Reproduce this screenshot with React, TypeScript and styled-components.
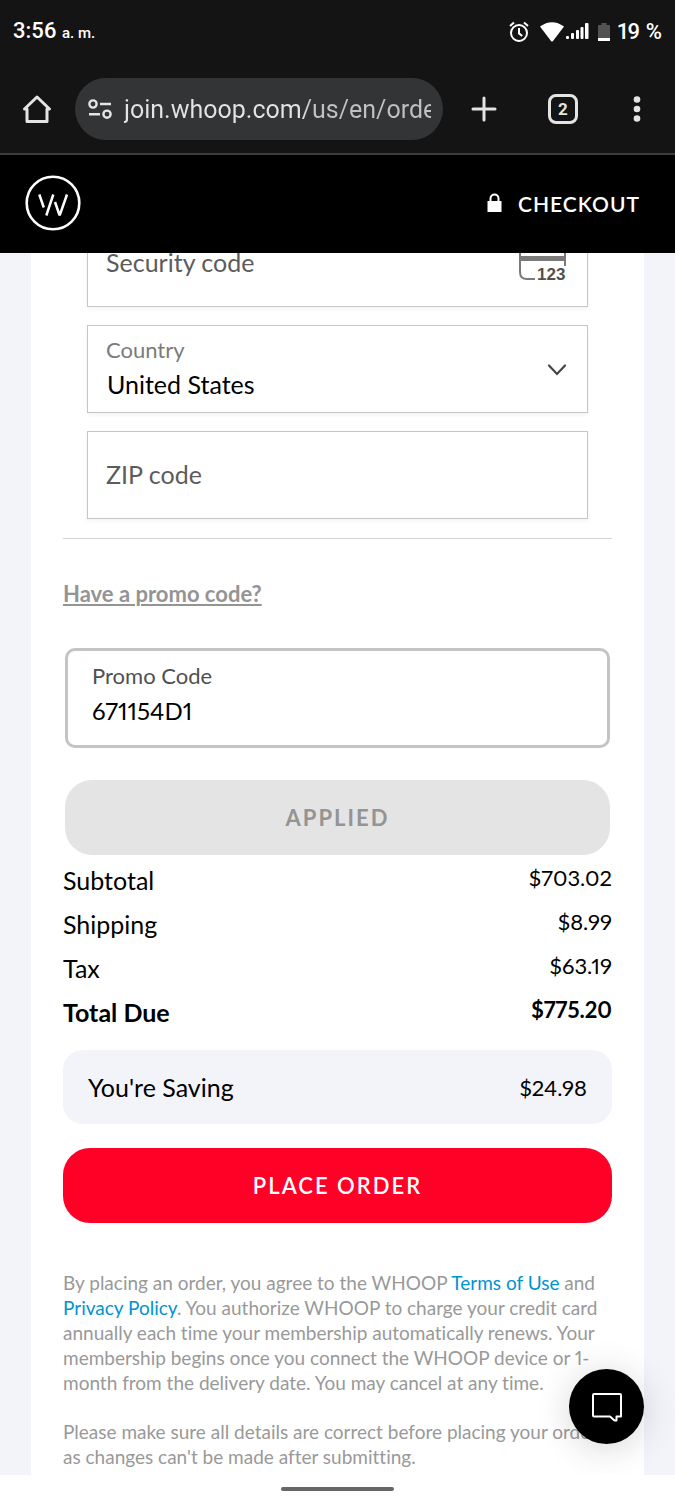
import React from 'react';
import styled, { createGlobalStyle } from 'styled-components';

const GlobalStyle = createGlobalStyle`
  * { box-sizing: border-box; }
  body {
    margin: 0;
    background: #ffffff;
    color: #000000;
    font-family: Lato, "Liberation Sans", sans-serif;
    font-variant-ligatures: none;
    font-variant-numeric: proportional-nums;
  }
  button, input, select { font: inherit; color: inherit; margin: 0; }
  button { border: 0; padding: 0; background: none; cursor: pointer; }
  svg { display: block; flex: none; }
`;

const Page = styled.div`
  display: flex;
  flex-direction: column;
  min-height: 100vh;
`;

const SystemChrome = styled.div`
  background: #141414;
  border-bottom: 2px solid #3e3e3e;
  color: #ffffff;
  font-family: Roboto, "Liberation Sans", sans-serif;
`;

const StatusBar = styled.div`
  display: flex;
  align-items: center;
  justify-content: space-between;
  height: 64px;
  padding: 0 13px;
  font-weight: 500;
`;

const Clock = styled.div`
  font-size: 22px;
  line-height: 28px;
`;

const Meridiem = styled.span`
  font-size: 15px;
`;

const StatusIcons = styled.div`
  display: flex;
  align-items: center;
  font-size: 22px;
  line-height: 28px;
`;

const Battery = styled.span`
  display: flex;
  align-items: center;
  gap: 8px;
  margin-left: 9px;
`;

const Signal = styled.span`
  display: flex;
  gap: 2px;
  margin-left: 11px;
`;

const Toolbar = styled.div`
  display: flex;
  align-items: center;
  height: 89px;
  padding: 0 30px 0 22px;
`;

const AddressBar = styled.div`
  display: flex;
  align-items: center;
  gap: 12px;
  flex: 1;
  min-width: 0;
  height: 62px;
  margin: 0 28px 0 23px;
  padding: 0 12px 0 13px;
  border-radius: 31px;
  background: #323436;
`;

const Address = styled.input`
  flex: 1;
  min-width: 0;
  height: 40px;
  padding: 2px 0 0;
  border: 0;
  outline: 0;
  font-size: 25px;
  color: transparent;
  background: linear-gradient(90deg, #e4e4e4 178px, #c0c1c2 186px);
  background-clip: text;
  -webkit-background-clip: text;
`;

const ToolButtons = styled.div`
  display: flex;
  align-items: center;
  gap: 51px;
`;

const TabCount = styled.button`
  width: 30px;
  height: 30px;
  border: 3px solid #e4e4e4;
  border-radius: 8px;
  color: #e4e4e4;
  font-size: 17px;
  font-weight: 700;
  line-height: 24px;
`;

const SiteHeader = styled.header`
  display: flex;
  align-items: center;
  justify-content: space-between;
  height: 98px;
  padding: 0 35px 2px 25px;
  background: #000000;
  color: #ffffff;
`;

const CheckoutTitle = styled.h1`
  display: flex;
  align-items: center;
  gap: 16px;
  margin: 0;
  font-size: 21px;
  font-weight: 600;
  letter-spacing: 1px;
`;

const Viewport = styled.main`
  flex: 1;
  overflow: hidden;
  padding: 0 31px;
  background: #f2f4f9;
`;

const Card = styled.form`
  margin-top: -34px;
  padding: 0 32px 6px;
  background: #ffffff;
`;

const CardFields = styled.div`
  display: flex;
  flex-direction: column;
  gap: 18px;
  padding: 0 24px 19px;
  border-bottom: 1px solid #d6d6d6;
`;

const Field = styled.div`
  display: flex;
  align-items: center;
  position: relative;
  height: 88px;
  border: 1px solid #c6c6c6;
  box-shadow: 0 2px 4px rgba(0, 0, 0, 0.05);
`;

const FieldInput = styled.input`
  width: 100%;
  height: 100%;
  padding: 0 18px 2px;
  border: 0;
  outline: 0;
  background: transparent;
  font-size: 25px;
  &::placeholder { color: #5c5c5c; opacity: 1; }
`;

const FloatingLabel = styled.label`
  position: absolute;
  top: 10px;
  left: 18px;
  color: #7b7b7b;
  font-size: 22px;
  line-height: 28px;
`;

const CountrySelect = styled.select`
  width: 100%;
  height: 100%;
  padding: 29px 48px 0 19px;
  border: 0;
  outline: 0;
  appearance: none;
  background: transparent;
  font-size: 25px;
`;

const FieldIcon = styled.span`
  position: absolute;
  right: 20px;
  pointer-events: none;
`;

const PromoToggle = styled.button`
  display: block;
  margin: 40px 0;
  color: #949494;
  font-size: 22px;
  font-weight: 700;
  line-height: 29px;
  text-decoration: underline;
  text-decoration-thickness: 2px;
  text-underline-offset: 2px;
`;

const PromoBlock = styled.div`
  display: flex;
  flex-direction: column;
  gap: 32px;
  padding: 0 2px;
`;

const PromoField = styled.div`
  display: flex;
  flex-direction: column;
  height: 100px;
  padding: 10px 24px;
  border: 3px solid #c4c4c4;
  border-radius: 10px;
`;

const PromoLabel = styled.label`
  color: #505050;
  font-size: 22px;
  line-height: 30px;
`;

const PromoInput = styled.input`
  height: 38px;
  padding: 0;
  border: 0;
  outline: 0;
  font-size: 24px;
`;

const PillButton = styled.button<{ $tone: 'muted' | 'primary' }>`
  width: 100%;
  height: 75px;
  border-radius: 27px;
  background: ${(p) => (p.$tone === 'primary' ? '#ff0026' : '#e4e4e4')};
  color: ${(p) => (p.$tone === 'primary' ? '#ffffff' : '#949494')};
  font-size: 22px;
  font-weight: ${(p) => (p.$tone === 'primary' ? 600 : 700)};
  letter-spacing: 2px;
`;

const Totals = styled.dl`
  margin: 3px 0 16px;
`;

const TotalRow = styled.div<{ $strong?: boolean }>`
  display: flex;
  justify-content: space-between;
  align-items: flex-start;
  font-weight: ${(p) => (p.$strong ? 700 : 400)};
`;

const TotalName = styled.dt`
  font-size: 25px;
  line-height: 44px;
`;

const Amount = styled.dd`
  margin: 0;
  font-size: 22px;
  line-height: 40px;
`;

const Savings = styled.div`
  display: flex;
  align-items: center;
  justify-content: space-between;
  height: 74px;
  margin-bottom: 24px;
  padding: 0 25px;
  border-radius: 20px;
  background: #f3f4f9;
  font-size: 25px;
`;

const SavingsAmount = styled.span`
  font-size: 22px;
`;

const Legal = styled.div`
  margin-top: 47px;
  color: #999999;
  font-size: 19px;
  line-height: 25px;
`;

const Paragraph = styled.p`
  margin: 0 0 24px;
  &:last-child { margin-bottom: 0; }
`;

const LegalLink = styled.a`
  color: #0093d0;
  text-decoration: none;
`;

const ChatButton = styled.button`
  position: fixed;
  right: 31px;
  bottom: 56px;
  display: flex;
  align-items: center;
  justify-content: center;
  width: 75px;
  height: 75px;
  border-radius: 50%;
  background: #000000;
  box-shadow: 0 4px 36px rgba(0, 0, 0, 0.16);
`;

const GestureBar = styled.div`
  display: flex;
  align-items: center;
  justify-content: center;
  position: relative;
  height: 25px;
  background: #ffffff;
`;

const Handle = styled.div`
  width: 113px;
  height: 4px;
  margin-top: 2px;
  border-radius: 2px;
  background: #666666;
`;

const totals = [
  { name: 'Subtotal', amount: '$703.02' },
  { name: 'Shipping', amount: '$8.99' },
  { name: 'Tax', amount: '$63.19' },
  { name: 'Total Due', amount: '$775.20', strong: true },
];

const AlarmIcon = () => (
  <svg width="20" height="22" viewBox="0 0 20 22" fill="none" stroke="#fff" strokeWidth="2">
    <circle cx="10" cy="12" r="8" />
    <path d="M10 7v5.400l3.200 2.600M1 5l4-3.500M19 5l-4-3.500" />
  </svg>
);

const WifiIcon = () => (
  <svg width="24" height="20" viewBox="0 0 24 20" fill="#fff">
    <path d="M0 4.500Q12-4 24 4.500L13 19q-1 1-2 0Z" />
  </svg>
);

const SignalIcon = () => (
  <svg width="23" height="18" viewBox="0 0 23 18" fill="#fff">
    <rect x="0" y="14" width="3" height="3" rx="1" />
    <rect x="5" y="11" width="3" height="6" rx="1" />
    <rect x="10" y="8" width="3" height="9" rx="1" />
    <rect x="14.500" y="5" width="3" height="12" rx="1" />
    <rect x="19" y="1" width="3.500" height="16" rx="1" />
  </svg>
);

const BatteryIcon = () => (
  <svg width="12" height="18" viewBox="0 0 12 18">
    <path d="M3.500 0h5v2H12v13H0V2h3.500Z" fill="#535353" />
    <path d="M0 15h12v3H0Z" fill="#fff" />
  </svg>
);

const HomeIcon = () => (
  <svg width="30" height="30" viewBox="0 0 30 30" fill="none" stroke="#e4e4e4" strokeWidth="3" strokeLinejoin="round">
    <path d="M2.500 15 15 3 27.500 15H25v12.500H5V15Z" />
  </svg>
);

const SiteInfoIcon = () => (
  <svg width="24" height="20" viewBox="0 0 24 20" fill="none" stroke="#e4e4e4" strokeWidth="2.400">
    <circle cx="5" cy="5" r="3.600" />
    <path d="M12 5h11M1 15.200h11" />
    <circle cx="19" cy="15.200" r="3.600" />
  </svg>
);

const PlusIcon = () => (
  <svg width="26" height="26" viewBox="0 0 26 26" fill="none" stroke="#e4e4e4" strokeWidth="3" strokeLinecap="round">
    <path d="M13 2v22M2 13h22" />
  </svg>
);

const MenuIcon = () => (
  <svg width="16" height="26" viewBox="0 0 16 26" fill="#e4e4e4">
    <circle cx="8" cy="3.500" r="3.300" />
    <circle cx="8" cy="13" r="3.300" />
    <circle cx="8" cy="22.500" r="3.300" />
  </svg>
);

const WhoopLogo = () => (
  <svg width="56" height="56" viewBox="0 0 56 56" fill="none" stroke="#fff">
    <circle cx="28" cy="28" r="26.300" strokeWidth="2.600" />
    <path
      d="M14.300 19.500 18.800 32.500M28.300 19.500 21.300 40.500M30 27 34.300 39.500H35L42 19.500"
      strokeWidth="2.500"
    />
  </svg>
);

const LockIcon = () => (
  <svg width="15" height="20" viewBox="0 0 15 20">
    <rect x="0.500" y="8" width="14" height="11" fill="#fff" />
    <path d="M3.500 9V5.500a4 4 0 0 1 8 0V9" fill="none" stroke="#fff" strokeWidth="2" />
  </svg>
);

const CvcIcon = () => (
  <svg width="49" height="44" viewBox="0 0 49 44">
    <path d="M17 38H9q-7 0-7-7V8q0-6 6-6h33q6 0 6 6v17" fill="none" stroke="#7a7a7a" strokeWidth="2" />
    <rect x="1" y="15" width="47" height="5" fill="#7a7a7a" />
    <text x="19" y="39" fill="#505050" fontFamily="'Liberation Sans', sans-serif" fontSize="17" fontWeight="700">123</text>
  </svg>
);

const ChevronIcon = () => (
  <svg width="20" height="14" viewBox="0 0 20 14" fill="none" stroke="#444" strokeWidth="2.200" strokeLinecap="round">
    <path d="M2 3.500 10 12l8-8.500" />
  </svg>
);

const ChatIcon = () => (
  <svg width="32" height="30" viewBox="0 0 32 30" fill="none" stroke="#fff" strokeWidth="2" strokeLinejoin="round">
    <path d="M3 2H29Q30 2 30 3V24.500H25.500V28.500H23.500L19 24.500H3Q2 24.500 2 23.500V3Q2 2 3 2Z" />
  </svg>
);

export default function App() {
  return (
    <Page>
      <GlobalStyle />
      <SystemChrome>
        <StatusBar>
          <Clock>
            3:56 <Meridiem>a. m.</Meridiem>
          </Clock>
          <StatusIcons>
            <AlarmIcon />
            <Signal>
              <WifiIcon />
              <SignalIcon />
            </Signal>
            <Battery>
              <BatteryIcon />
              19 %
            </Battery>
          </StatusIcons>
        </StatusBar>
        <Toolbar>
          <button type="button" aria-label="Home">
            <HomeIcon />
          </button>
          <AddressBar>
            <SiteInfoIcon />
            <Address type="text" aria-label="Address" defaultValue="join.whoop.com/us/en/order" />
          </AddressBar>
          <ToolButtons>
            <button type="button" aria-label="New tab">
              <PlusIcon />
            </button>
            <TabCount type="button" aria-label="Open tabs">2</TabCount>
            <button type="button" aria-label="Menu">
              <MenuIcon />
            </button>
          </ToolButtons>
        </Toolbar>
      </SystemChrome>

      <SiteHeader>
        <WhoopLogo />
        <CheckoutTitle>
          <LockIcon />
          CHECKOUT
        </CheckoutTitle>
      </SiteHeader>

      <Viewport>
        <Card onSubmit={(e) => e.preventDefault()}>
          <CardFields>
            <Field>
              <FieldInput type="text" aria-label="Security code" placeholder="Security code" />
              <FieldIcon>
                <CvcIcon />
              </FieldIcon>
            </Field>
            <Field>
              <FloatingLabel htmlFor="country">Country</FloatingLabel>
              <CountrySelect id="country" defaultValue="US">
                <option value="US">United States</option>
                <option value="CA">Canada</option>
              </CountrySelect>
              <FieldIcon>
                <ChevronIcon />
              </FieldIcon>
            </Field>
            <Field>
              <FieldInput type="text" aria-label="ZIP code" placeholder="ZIP code" />
            </Field>
          </CardFields>

          <PromoToggle type="button">Have a promo code?</PromoToggle>

          <PromoBlock>
            <PromoField>
              <PromoLabel htmlFor="promo">Promo Code</PromoLabel>
              <PromoInput id="promo" type="text" defaultValue="671154D1" />
            </PromoField>
            <PillButton type="button" $tone="muted">APPLIED</PillButton>
          </PromoBlock>

          <Totals>
            {totals.map((t) => (
              <TotalRow key={t.name} $strong={t.strong}>
                <TotalName>{t.name}</TotalName>
                <Amount>{t.amount}</Amount>
              </TotalRow>
            ))}
          </Totals>

          <Savings>
            <span>You're Saving</span>
            <SavingsAmount>$24.98</SavingsAmount>
          </Savings>

          <PillButton type="submit" $tone="primary">PLACE ORDER</PillButton>

          <Legal>
            <Paragraph>
              By placing an order, you agree to the WHOOP <LegalLink href="#terms">Terms of Use</LegalLink> and{' '}
              <LegalLink href="#privacy">Privacy Policy</LegalLink>. You authorize WHOOP to charge your credit card
              annually each time your membership automatically renews. Your membership begins once you connect the
              WHOOP device or 1-month from the delivery date. You may cancel at any time.
            </Paragraph>
            <Paragraph>
              Please make sure all details are correct before placing your order as changes can't be made after
              submitting.
            </Paragraph>
          </Legal>
        </Card>
      </Viewport>

      <ChatButton type="button" aria-label="Open chat">
        <ChatIcon />
      </ChatButton>
      <GestureBar>
        <Handle />
      </GestureBar>
    </Page>
  );
}
